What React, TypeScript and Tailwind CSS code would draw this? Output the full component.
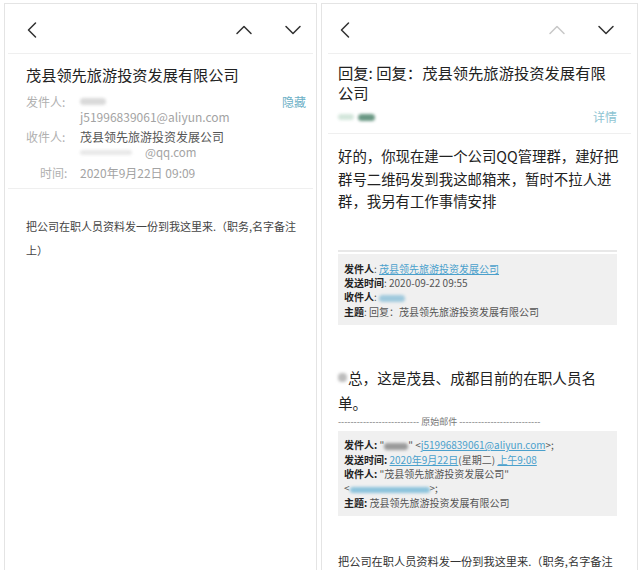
import { ChevronLeft, ChevronUp, ChevronDown } from 'lucide-react'

function Blur({ className }: { className: string }) {
  return <span className={`inline-block align-middle rounded-sm blur-[1.5px] ${className}`} />
}

function Nav({ upMuted, className }: { upMuted?: boolean; className: string }) {
  return (
    <div className={`flex items-center h-[49px] pt-[2px] ${className}`}>
      <ChevronLeft size={28} strokeWidth={1.3} className="text-[#333]" />
      <div className="ml-auto flex items-center gap-[21px]">
        <ChevronUp size={28} strokeWidth={1.3} className={upMuted ? 'text-[#c8c8c8]' : 'text-[#333]'} />
        <ChevronDown size={28} strokeWidth={1.3} className="text-[#333]" />
      </div>
    </div>
  )
}

function LeftPanel() {
  return (
    <div className="w-[313px] shrink-0 border-x border-t border-[#e4e4e4] flex flex-col">
      <Nav className="pl-[13px] pr-[9px]" />
      <div className="mx-[3px] border-b border-[#efefef]" />

      <div className="pl-[21px] pr-[10px] pt-[8px] pb-[8px]">
        <h1 className="text-[15.2px] leading-[24px] text-[#222]">茂县领先旅游投资发展有限公司</h1>
        <div className="mt-[8px] text-[12px] leading-[15px] flex flex-col gap-[5px]">
          <div className="flex">
            <span className="w-[54px] text-[#b0b0b0]">发件人:</span>
            <div className="flex-1">
              <div className="h-[15px] flex items-center">
                <Blur className="w-[26px] h-[7px] bg-[#dadada]" />
              </div>
              <div className="text-[#a3a3a3]">j51996839061@aliyun.com</div>
            </div>
            <span className="text-[#6cb0c6]">隐藏</span>
          </div>
          <div className="flex">
            <span className="w-[54px] text-[#b0b0b0]">收件人:</span>
            <div>
              <div className="text-[#555]">茂县领先旅游投资发展公司</div>
              <div className="mt-[1px] h-[15px] flex items-center text-[11.5px] text-[#a3a3a3]">
                <Blur className="w-[52px] h-[5px] bg-[#e8e8e8] mr-[13px]" />
                <span>@qq.com</span>
              </div>
            </div>
          </div>
          <div className="flex">
            <span className="w-[54px] pl-[14px] text-[#b0b0b0]">时间:</span>
            <span className="text-[#a3a3a3]">2020年9月22日 09:09</span>
          </div>
        </div>
      </div>
      <div className="mx-[3px] border-b border-[#efefef]" />

      <div className="pl-[21px] pr-[12px] pt-[25px] text-[11px] leading-[24px] text-[#444]">
        <div className="whitespace-nowrap">把公司在职人员资料发一份到我这里来.（职务,名字备注</div>
        <div>上）</div>
      </div>
    </div>
  )
}

function InfoBox({ children, className }: { children: React.ReactNode; className: string }) {
  return <div className={`bg-[#f0f0f0] px-[6px] text-[10px] leading-[14.4px] text-[#555] ${className}`}>{children}</div>
}

function RightPanel() {
  const link = 'text-[#4aa0cc] underline'
  return (
    <div className="w-[317px] shrink-0 border-x border-t border-[#e4e4e4] flex flex-col">
      <Nav upMuted className="pl-[9px] pr-[17px]" />
      <div className="mx-[6px] border-b border-[#efefef]" />

      <div className="pl-[16px] pr-[20px] pt-[8px] pb-[8px]">
        <h1 className="text-[15.3px] leading-[20px] text-[#222]">
          <div className="whitespace-nowrap">回复: 回复：茂县领先旅游投资发展有限</div>
          <div>公司</div>
        </h1>
        <div className="mt-[7px] flex items-center text-[12px] leading-[16px]">
          <Blur className="w-[16px] h-[6px] bg-[#d3e6db]" />
          <Blur className="w-[17px] h-[7px] bg-[#6a9884] ml-[4px]" />
          <span className="ml-auto text-[#8ec4d2]">详情</span>
        </div>
      </div>
      <div className="mx-[6px] border-b border-[#efefef]" />

      <div className="pl-[16px] pr-[20px] pt-[11px]">
        <div className="text-[14.4px] leading-[22.5px] text-[#222]">
          <div className="whitespace-nowrap">好的，你现在建一个公司QQ管理群，建好把</div>
          <div className="whitespace-nowrap">群号二维码发到我这邮箱来，暂时不拉人进</div>
          <div>群，我另有工作事情安排</div>
        </div>

        <div className="mt-[37px] border-t-2 border-[#e8e8e8]" />
        <InfoBox className="mt-[2px] pt-[8px] pb-[6px]">
          <div>
            <b className="text-[#222]">发件人</b>: <span className={link}>茂县领先旅游投资发展公司</span>
          </div>
          <div>
            <b className="text-[#222]">发送时间</b>: 2020-09-22 09:55
          </div>
          <div>
            <b className="text-[#222]">收件人</b>: <Blur className="w-[26px] h-[7px] bg-[#9fc9dd]" />
          </div>
          <div>
            <b className="text-[#222]">主题</b>: 回复：茂县领先旅游投资发展有限公司
          </div>
        </InfoBox>

        <div className="mt-[40px] text-[14.6px] leading-[25px] text-[#222]">
          <div className="whitespace-nowrap flex items-center">
            <Blur className="w-[9px] h-[9px] bg-[#bdbdbd] mr-[1px]" />总，这是茂县、成都目前的在职人员名
          </div>
          <div>单。</div>
        </div>
        <div className="mt-[1px] text-[9px] leading-[12px] text-[#777] whitespace-nowrap">
          -------------------------- 原始邮件 --------------------------
        </div>
        <InfoBox className="mt-[3px] pt-[7px] pb-[6px]">
          <div className="whitespace-nowrap">
            <b className="text-[#222]">发件人:</b> "<Blur className="w-[24px] h-[7px] bg-[#9a9a9a]" />" &lt;
            <span className={link}>j51996839061@aliyun.com</span>&gt;;
          </div>
          <div className="whitespace-nowrap">
            <b className="text-[#222]">发送时间:</b> <span className={link}>2020年9月22日</span>(星期二){' '}
            <span className={link}>上午9:08</span>
          </div>
          <div>
            <b className="text-[#222]">收件人:</b> "茂县领先旅游投资发展公司"
          </div>
          <div>
            &lt;<Blur className="w-[80px] h-[6px] bg-[#8cc3dc]" />&gt;;
          </div>
          <div>
            <b className="text-[#222]">主题:</b> 茂县领先旅游投资发展有限公司
          </div>
        </InfoBox>

        <div className="mt-[37px] text-[11.2px] leading-[16px] text-[#333] whitespace-nowrap">
          把公司在职人员资料发一份到我这里来.（职务,名字备注
        </div>
      </div>
    </div>
  )
}

export default function App() {
  return (
    <div
      className="w-[642px] h-[570px] overflow-hidden bg-white flex gap-[4px] pl-[4px] pt-[3px]"
      style={{ fontFamily: '"Noto Sans CJK SC", "Noto Sans", sans-serif' }}
    >
      <LeftPanel />
      <RightPanel />
    </div>
  )
}
